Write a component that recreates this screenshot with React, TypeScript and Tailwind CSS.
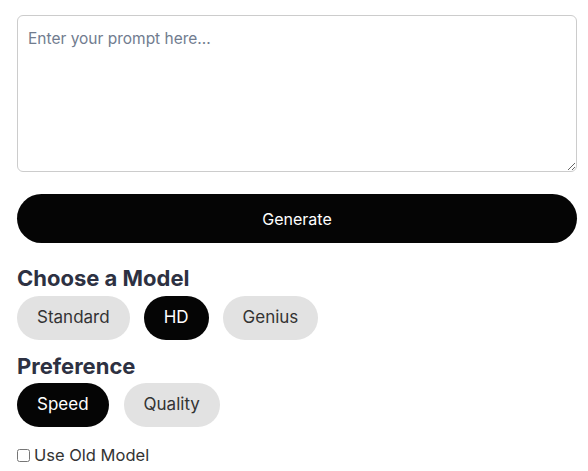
import { useState } from 'react';

const models = ['Standard', 'HD', 'Genius'];
const prefs = ['Speed', 'Quality'];

function Pill({ label, active, onClick }: { label: string; active: boolean; onClick: () => void }) {
  return (
    <button
      type="button"
      onClick={onClick}
      className={
        active
          ? 'h-11 rounded-full bg-[#050505] px-5 text-[17px] text-white'
          : 'h-11 rounded-full bg-[#e2e2e2] px-5 text-[17px] text-[#333333]'
      }
    >
      {label}
    </button>
  );
}

export default function App() {
  const [model, setModel] = useState('HD');
  const [pref, setPref] = useState('Speed');
  const [prompt, setPrompt] = useState('');

  return (
    <div className="min-h-screen bg-white px-[17px] pt-[15px] font-['Inter','Liberation_Sans',sans-serif] text-[#333333]">
      <div className="w-[560px]">
        <textarea
          value={prompt}
          onChange={(e) => setPrompt(e.target.value)}
          placeholder="Enter your prompt here..."
          className="block h-[157px] w-full rounded-md border border-[#cccccc] px-[10px] py-[11px] text-[15.5px] text-[#333] placeholder:text-[#717c8f] focus:outline-none"
        />

        <button type="button" className="mt-[22px] h-[49px] w-full rounded-full bg-[#050505] text-base text-white">
          Generate
        </button>

        <h2 className="mt-[21px] text-[22px] leading-[28px] font-bold text-[#2d3142]">Choose a Model</h2>
        <div className="mt-1 flex gap-[14px]">
          {models.map((m) => (
            <Pill key={m} label={m} active={model === m} onClick={() => setModel(m)} />
          ))}
        </div>

        <h2 className="mt-3 text-[22px] leading-[28px] font-bold text-[#2d3142]">Preference</h2>
        <div className="mt-[3px] flex gap-[15px]">
          {prefs.map((p) => (
            <Pill key={p} label={p} active={pref === p} onClick={() => setPref(p)} />
          ))}
        </div>

        <label className="mt-4 flex items-center gap-1 text-[16.5px] leading-6 text-[#333333]">
          <input type="checkbox" className="h-[13px] w-[13px]" />
          Use Old Model
        </label>
      </div>
    </div>
  );
}
